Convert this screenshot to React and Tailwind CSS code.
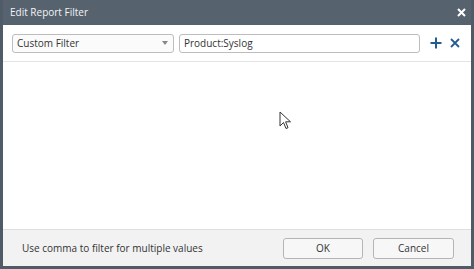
const font = { fontFamily: '"Open Sans", "Noto Sans", sans-serif' };

const App = () => {
    return (
        <div className="w-[474px] h-[269px] bg-[#4f5b66] p-[3px] pt-0 flex flex-col" style={font}>
            <div className="h-[25px] flex items-center justify-between pl-[7px] pr-[5px] bg-[#56626e]">
                <span className="text-[10px] text-[#f2f4f6]">Edit Report Filter</span>
                <svg width="9" height="9" viewBox="0 0 9 9" className="mb-[1px]">
                    <path d="M1 1 L8 8 M8 1 L1 8" stroke="#ffffff" strokeWidth="2" />
                </svg>
            </div>

            <div className="flex-1 flex flex-col bg-white">
                <div className="h-[37px] flex items-center pl-[9px] pr-[11px] border-b border-[#e3e3e3]">
                    <div className="w-[162px] h-[19px] flex items-center justify-between border border-[#bdbdbd] rounded-[3px] bg-[#fbfbfb] pl-[4px] pr-[5px]">
                        <span className="text-[10px] text-[#333]">Custom Filter</span>
                        <svg width="6" height="4" viewBox="0 0 6 4">
                            <path d="M0 0 L6 0 L3 4 Z" fill="#888" />
                        </svg>
                    </div>
                    <div className="ml-[5px] w-[241px] h-[19px] flex items-center border border-[#bdbdbd] rounded-[3px] bg-white pl-[4px]">
                        <span className="text-[10px] text-[#333]">Product:Syslog</span>
                    </div>
                    <svg width="12" height="12" viewBox="0 0 12 12" className="ml-[10px]">
                        <path d="M6 0.5 V11.5 M0.5 6 H11.5" stroke="#255c8f" strokeWidth="2" />
                    </svg>
                    <svg width="10" height="10" viewBox="0 0 10 10" className="ml-[8px]">
                        <path d="M1 1 L9 9 M9 1 L1 9" stroke="#255c8f" strokeWidth="1.8" />
                    </svg>
                </div>

                <div className="flex-1 relative">
                    <svg width="13" height="19" viewBox="0 0 13 19" className="absolute left-[276px] top-[49px]">
                        <path d="M1 1 L1 15 L4.5 11.5 L7 17.5 L9 16.7 L6.6 10.8 L11.5 10.8 Z" fill="#ffffff" stroke="#333" strokeWidth="1" strokeLinejoin="round" />
                    </svg>
                </div>

                <div className="h-[37px] flex items-center justify-between bg-[#f2f2f2] border-t border-[#dedede] pl-[19px] pr-[17px]">
                    <span className="text-[10px] text-[#333]">Use comma to filter for multiple values</span>
                    <div className="flex gap-[10px]">
                        <button className="w-[80px] h-[21px] border border-[#b5b5b5] rounded-[3px] bg-[#f7f7f7] text-[10px] text-[#333]">OK</button>
                        <button className="w-[81px] h-[21px] border border-[#b5b5b5] rounded-[3px] bg-[#f7f7f7] text-[10px] text-[#333]">Cancel</button>
                    </div>
                </div>
            </div>
        </div>
    );
};

export default App;
